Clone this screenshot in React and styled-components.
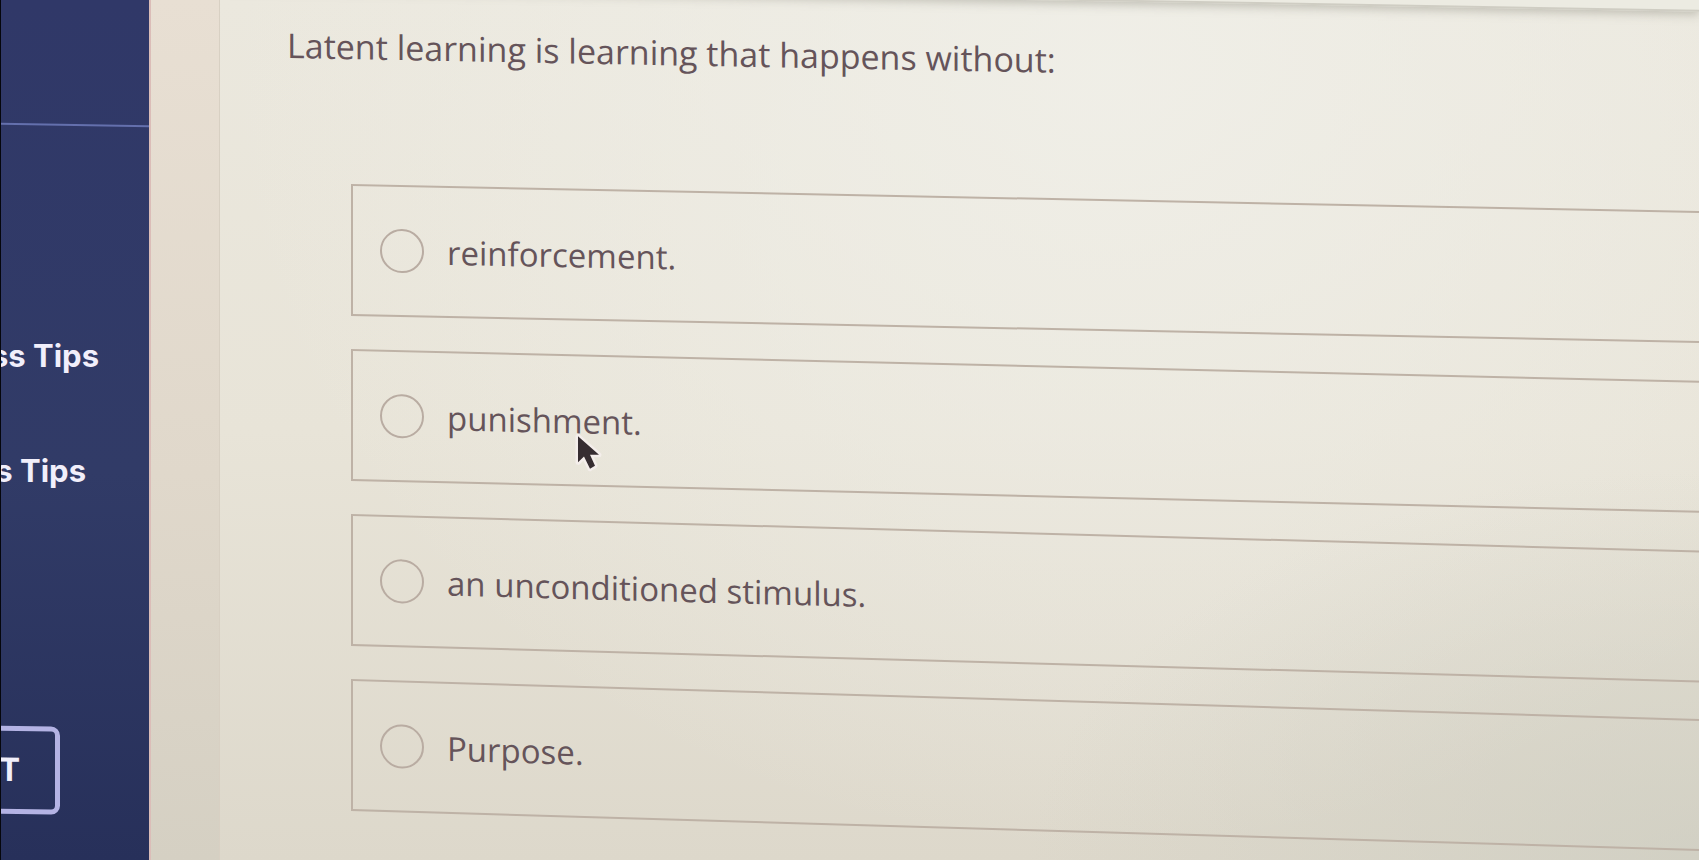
import React from "react";
import styled, { createGlobalStyle } from "styled-components";

const GlobalStyle = createGlobalStyle`
  *, *::before, *::after { box-sizing: border-box; }
  html, body { margin: 0; overflow: hidden; background: #e4dfd2; }
`;

const Page = styled.div`
  display: flex;
  height: 100vh;
  overflow: hidden;
  font-family: "Open Sans", "Noto Sans", sans-serif;
  color: #65545a;
`;

const Sidebar = styled.aside`
  flex: 0 0 151px;
  display: flex;
  flex-direction: column;
  overflow: hidden;
  border-left: 1px solid #05060c;
  border-right: 2px solid #dbbdb8;
  background: linear-gradient(180deg, #303868 0%, #313b67 55%, #27305a 100%);
  font-family: Inter, "Liberation Sans", sans-serif;
`;

const SidebarTop = styled.div`
  flex: 0 0 126px;
  border-bottom: 2px solid #6470ad;
  transform: skewY(1deg);
`;

const Nav = styled.nav`
  flex: 0 0 600px;
  display: flex;
  flex-direction: column;
  gap: 75px;
  padding-top: 210px;
`;

const NavLink = styled.a`
  display: flex;
  justify-content: flex-end;
  padding-right: ${(p) => p.$inset}px;
  color: #f1effb;
  font-size: 31px;
  font-weight: 700;
  line-height: 40px;
  white-space: nowrap;
  text-decoration: none;
`;

const OutlineButton = styled.button`
  flex: 0 0 88px;
  width: 80px;
  margin-left: -21px;
  padding: 0 35px 0 0;
  border: 5px solid #b4b3e4;
  border-radius: 9px;
  background: transparent;
  color: #f1effb;
  font: 700 32px/40px Inter, "Liberation Sans", sans-serif;
  text-align: right;
  transform: skewY(1deg);
`;

const Gutter = styled.div`
  flex: 0 0 68px;
  background: linear-gradient(180deg, #e8dfd3 0%, #e0d8cb 55%, #d5d0c3 100%);
`;

const Panel = styled.main`
  position: relative;
  flex: 1;
  min-width: 0;
  padding: 22px 0 0 67px;
  border-left: 1px solid #d8d0c3;
  background:
    radial-gradient(ellipse at 100% 100%, rgba(204, 204, 192, 0.65) 0%, rgba(204, 204, 192, 0) 32%),
    radial-gradient(ellipse at 60% 8%, rgba(240, 239, 232, 0.9) 0%, rgba(240, 239, 232, 0) 70%),
    linear-gradient(180deg, #ebe8de 0%, #e8e4d8 50%, #ddd8cb 100%);
`;

const TopEdge = styled.div`
  position: absolute;
  top: -28px;
  left: 0;
  right: 0;
  height: 14px;
  background: #ecebe2;
  border-bottom: 2px solid #cfcdc3;
  box-shadow: 0 3px 10px rgba(150, 148, 135, 0.5);
  transform: skewY(1deg);
  transform-origin: left top;
`;

const Question = styled.form`
  display: flex;
  flex-direction: column;
`;

const Prompt = styled.h1`
  margin: 0;
  font-size: 34px;
  font-weight: 400;
  line-height: 46px;
  transform: skewY(1.1deg);
  transform-origin: left center;
`;

const Choices = styled.div`
  display: flex;
  flex-direction: column;
  gap: 33px;
  padding: 116px 0 0 64px;
`;

const Choice = styled.label`
  position: relative;
  display: flex;
  align-items: center;
  gap: 23px;
  height: 132px;
  margin-right: -20px;
  padding-left: 27px;
  border: 2px solid #beb2a6;
  font-size: 33px;
  line-height: 44px;
  transform: skewY(${(p) => p.$tilt}deg);
  transform-origin: left center;
`;

const Radio = styled.input`
  appearance: none;
  flex: none;
  width: 44px;
  height: 44px;
  margin: 0;
  border: 2px solid #b9aca2;
  border-radius: 50%;
  &:checked { box-shadow: inset 0 0 0 9px #ebe7db; background: #5e4a50; }
`;

const ChoiceText = styled.span`
  padding-top: 2px;
`;

const Pointer = styled.svg`
  position: absolute;
  left: 221px;
  top: 77px;
  width: 34px;
  height: 42px;
`;

const choices = [
  { text: "reinforcement.", tilt: 1.15 },
  { text: "punishment.", tilt: 1.35 },
  { text: "an unconditioned stimulus.", tilt: 1.55 },
  { text: "Purpose.", tilt: 1.7 },
];

export default function App() {
  return (
    <Page>
      <GlobalStyle />
      <Sidebar>
        <SidebarTop />
        <Nav>
          <NavLink href="#ss-tips" $inset={50}>ss Tips</NavLink>
          <NavLink href="#s-tips" $inset={63}>s Tips</NavLink>
        </Nav>
        <OutlineButton type="button">T</OutlineButton>
      </Sidebar>
      <Gutter />
      <Panel>
        <TopEdge />
        <Question>
          <Prompt id="prompt">Latent learning is learning that happens without:</Prompt>
          <Choices role="radiogroup" aria-labelledby="prompt">
            {choices.map((choice, i) => (
              <Choice key={choice.text} $tilt={choice.tilt}>
                <Radio type="radio" name="answer" value={choice.text} />
                <ChoiceText>{choice.text}</ChoiceText>
                {i === 1 && (
                  <Pointer viewBox="0 0 34 42" aria-hidden="true">
                    <path
                      d="M4 3 V29 L10 23 L16 35 L21 32 L16 21 H25 Z"
                      fill="#362d31"
                      stroke="#f4eeeb"
                      strokeWidth="5"
                      strokeLinejoin="round"
                      paintOrder="stroke"
                    />
                  </Pointer>
                )}
              </Choice>
            ))}
          </Choices>
        </Question>
      </Panel>
    </Page>
  );
}
